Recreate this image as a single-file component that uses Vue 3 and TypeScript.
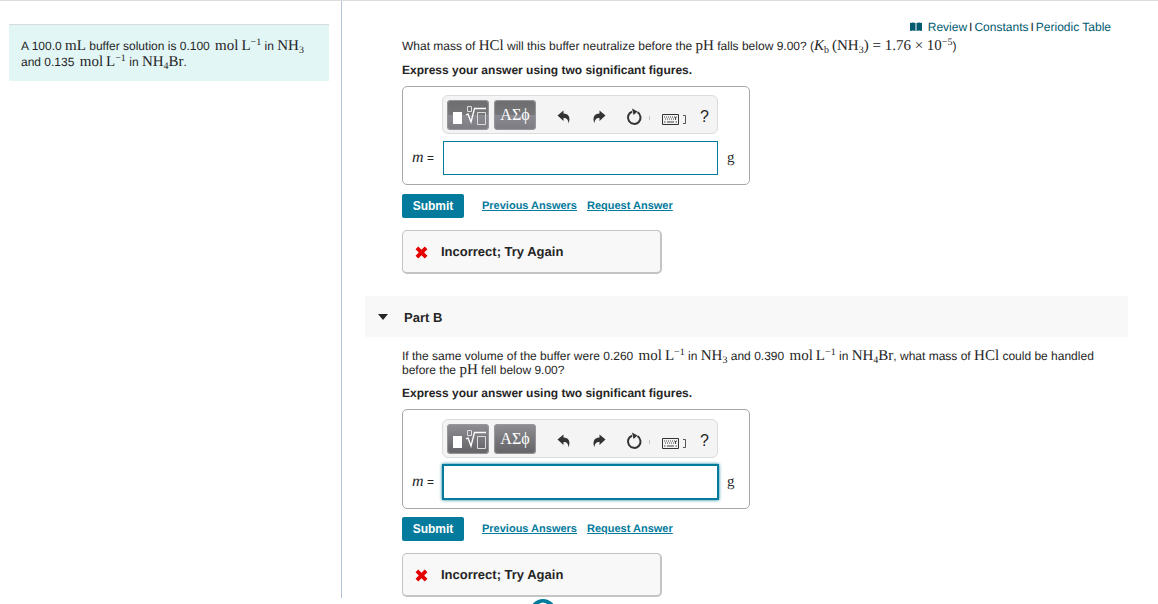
<script setup lang="ts">
import { ref } from 'vue'

interface Part {
  id: string
  title: string
  showHeader: boolean
}

const parts: Part[] = [
  { id: 'a', title: 'Part A', showHeader: false },
  { id: 'b', title: 'Part B', showHeader: true },
]

const answers = ref<Record<string, string>>({ a: '', b: '' })
const active = ref('b')
</script>

<template>
  <div class="page">
    <aside class="side">
      <div class="intro">
        A 100.0 <span class="math">mL</span> buffer solution is 0.100 <span class="math unit">mol&#8201;L<sup>−1</sup></span> in
        <span class="math">NH<sub>3</sub></span> and 0.135 <span class="math unit">mol&#8201;L<sup>−1</sup></span> in
        <span class="math">NH<sub>4</sub>Br</span>.
      </div>
    </aside>

    <main class="content">
      <nav class="resources">
        <svg class="book" viewBox="0 0 12 10" aria-hidden="true">
          <path d="M0 1Q3 0 5.500 1V9Q3 8 0 9ZM6.500 1Q9 0 12 1V9Q9 8 6.500 9Z" />
        </svg>
        <a href="#review">Review</a><span>I</span><a href="#constants">Constants</a><span>I</span><a href="#table">Periodic Table</a>
      </nav>

      <section v-for="part in parts" :key="part.id" class="part">
        <h2 v-if="part.showHeader" class="part-header">
          <svg class="caret" viewBox="0 0 10 6" aria-hidden="true"><path d="M0 0H10L5 6Z" /></svg>
          {{ part.title }}
        </h2>

        <div class="part-body">
          <p v-if="part.id === 'a'" class="question">
            What mass of <span class="math">HCl</span> will this buffer neutralize before the <span class="math">pH</span> falls below
            9.00? (<span class="math"><i>K</i><sub>b</sub>&#8201;(NH<sub>3</sub>) = 1.76 × 10<sup>−5</sup></span>)
          </p>
          <p v-else class="question">
            If the same volume of the buffer were 0.260 <span class="math unit">mol&#8201;L<sup>−1</sup></span> in
            <span class="math">NH<sub>3</sub></span> and 0.390 <span class="math unit">mol&#8201;L<sup>−1</sup></span> in
            <span class="math">NH<sub>4</sub>Br</span>, what mass of <span class="math">HCl</span> could be handled<br />
            before the <span class="math">pH</span> fell below 9.00?
          </p>
          <p class="instruction">Express your answer using two significant figures.</p>

          <form class="answer" @submit.prevent>
            <div class="entry">
              <div class="toolbar" :class="{ smooth: active === part.id }">
                <button type="button" class="palette" aria-label="Templates">
                  <svg viewBox="0 0 42 30" aria-hidden="true">
                    <path d="M6 12H15V24H6Z" fill="#fff" />
                    <path d="M20.500 6.500H24.500V11.500H20.500ZM30.500 12.500H38.500V24.500H30.500Z" fill="none" stroke="#ddd" />
                    <path d="M19 15L21 14L24 22L27.500 8.500H39" fill="none" stroke="#fff" stroke-width="1.300" />
                  </svg>
                </button>
                <button type="button" class="palette greek">ΑΣϕ</button>
                <button type="button" class="tool undo" aria-label="Undo">
                  <svg viewBox="0 0 14 14" aria-hidden="true">
                    <path d="M0.500 5.500L6.500 0.500V3.500C11.500 3.500 14 7.500 11.500 13.500C11.500 10 10 8 6.500 8V11Z" />
                  </svg>
                </button>
                <button type="button" class="tool redo" aria-label="Redo">
                  <svg viewBox="0 0 14 14" aria-hidden="true">
                    <path d="M13.500 5.500L7.500 0.500V3.500C2.500 3.500 0 7.500 2.500 13.500C2.500 10 4 8 7.500 8V11Z" />
                  </svg>
                </button>
                <button type="button" class="tool reset" aria-label="Reset">
                  <svg viewBox="0 0 16 18" aria-hidden="true">
                    <path d="M11.500 4.200A6.300 6.300 0 1 1 6 3.700" fill="none" stroke="#333" stroke-width="2" />
                    <path d="M6 0.500L11.500 3.500L7.500 7Z" />
                  </svg>
                </button>
                <span class="tick"></span>
                <button type="button" class="tool keys" aria-label="Keyboard shortcuts">
                  <svg viewBox="0 0 24 12" aria-hidden="true">
                    <path d="M0.500 1.500H16.500V11.500H0.500Z" fill="none" stroke="#333" />
                    <path d="M2 4H15M3 6H15" stroke="#444" stroke-dasharray="1 1" fill="none" />
                    <path d="M2 9H3.500M5 9H12M13.500 9H15M13.500 4V7" stroke="#444" fill="none" />
                    <path d="M21 2.500H23.500V10.500H21" stroke="#555" fill="none" />
                  </svg>
                </button>
                <button type="button" class="tool help" aria-label="Help">?</button>
              </div>
              <label class="variable" :for="'answer-' + part.id"><i>m</i> =</label>
              <input
                :id="'answer-' + part.id"
                v-model="answers[part.id]"
                class="field"
                :class="{ active: active === part.id }"
                type="text"
                autocomplete="off"
                @focus="active = part.id"
              />
              <span class="grams">g</span>
            </div>

            <div class="actions">
              <button type="submit" class="submit">Submit</button>
              <a href="#previous">Previous Answers</a>
              <a href="#request">Request Answer</a>
            </div>
          </form>

          <div class="feedback" role="status">
            <svg class="cross" viewBox="0 0 12 12" aria-hidden="true">
              <path d="M3 0.500L6 3.500L9 0.500L11.500 3L8.500 6L11.500 9L9 11.500L6 8.500L3 11.500L0.500 9L3.500 6L0.500 3Z" />
            </svg>
            Incorrect; Try Again
          </div>
        </div>
      </section>

      <button type="button" class="more" aria-label="More">
        <svg viewBox="0 0 26 26" aria-hidden="true">
          <circle cx="13" cy="13" r="13" fill="#047a9c" />
          <path d="M8 7Q13 2 18 7" fill="none" stroke="#fff" stroke-width="2" />
        </svg>
      </button>
    </main>
  </div>
</template>

<style>
body {
  margin: 0;
  background: #fff;
}
</style>

<style scoped>
.page {
  box-sizing: border-box;
  display: flex;
  height: 100vh;
  overflow: hidden;
  border-top: 1px solid #dcdcdc;
  color: #252525;
  font: 12px/14px "Liberation Sans", Arial, sans-serif;
  text-rendering: geometricPrecision;
}
.side {
  box-sizing: border-box;
  flex: 0 0 342px;
  margin-bottom: 6px;
  padding: 23px 12px 0 9px;
  border-right: 1px solid #b4c3d6;
}
.intro {
  padding: 13px 12px 11px;
  border-top: 1px solid #d5dcdc;
  background: #e2f6f6;
  line-height: 16px;
}
.math {
  font-family: "Liberation Serif", "Times New Roman", serif;
  font-size: 15px;
  line-height: 0;
}
.math sub,
.math sup {
  font-size: 10px;
  line-height: 0;
}
.math sub {
  vertical-align: -3px;
}
.math sup {
  vertical-align: 5px;
}
.unit {
  margin-left: 2px;
}
.content {
  flex: 1;
  min-width: 0;
  padding: 19px 30px 0 23px;
}
.resources {
  display: flex;
  justify-content: flex-end;
  gap: 2px;
  margin-right: 17px;
}
.resources a {
  color: #005a70;
  text-decoration: none;
}
.book {
  width: 12px;
  height: 10px;
  margin: 2px 4px 0 0;
  fill: #005a70;
}
.part-header {
  display: flex;
  align-items: center;
  box-sizing: border-box;
  gap: 16px;
  height: 41px;
  margin: 22px 0 12px;
  padding: 2px 13px 0;
  background: #f8f8f8;
  font-size: 13px;
}
.caret {
  width: 10px;
  height: 6px;
  margin-bottom: 2px;
  fill: #252525;
}
.part-body {
  padding-left: 37px;
}
.question {
  margin: 0;
}
.part:first-of-type .question {
  margin-top: 5px;
}
.instruction {
  margin: 10px 0 9px;
  font-weight: bold;
}
.part:last-of-type .instruction {
  margin-top: 9px;
}
.entry {
  box-sizing: border-box;
  display: grid;
  grid-template-columns: 31px 276px auto;
  grid-template-rows: 39px 34px;
  row-gap: 7px;
  align-items: center;
  width: 348px;
  padding: 8px 0 9px 8px;
  border: 1px solid #a8a8a8;
  border-radius: 5px;
}
.part:last-of-type .entry {
  padding-top: 9px;
}
.toolbar {
  box-sizing: border-box;
  grid-column: 2;
  display: flex;
  align-items: center;
  height: 39px;
  padding: 0 4px;
  border: 1px solid #dcdcdc;
  border-radius: 6px;
  background: #f4f4f4;
}
button {
  padding: 0;
  border: 0;
  background: none;
  font: inherit;
  color: inherit;
}
.palette {
  width: 42px;
  height: 30px;
  margin-right: 5px;
  border-radius: 4px;
  background: linear-gradient(#6c6c6f 0%, #77777a 50%, #8a8a92 51%, #7b7b80 100%);
  box-shadow: inset 0 0 1px 1px #98989c;
  color: #fff;
}
.smooth .palette {
  background: linear-gradient(#8e8e94, #636366);
}
.palette svg {
  display: block;
  width: 42px;
  height: 30px;
}
.greek {
  font: 16px/28px "Liberation Serif", "Times New Roman", serif;
}
.tool svg {
  display: block;
  fill: #333;
}
.undo,
.redo {
  width: 14px;
}
.undo {
  margin-left: 16px;
}
.redo {
  margin-left: 21px;
}
.undo,
.redo,
.reset,
.keys {
  padding-top: 5px;
}
.reset {
  width: 16px;
  margin-left: 20px;
}
.tick {
  width: 1px;
  height: 4px;
  margin: 6px 12px 0 7px;
  background: #c4c4c4;
}
.keys {
  width: 24px;
  padding-top: 8px;
}
.help {
  margin-left: 14px;
  padding-top: 5px;
  font-size: 16px;
}
.variable {
  grid-column: 1;
  grid-row: 2;
  padding-left: 1px;
  white-space: nowrap;
}
.variable i {
  font: italic 16px/16px "Liberation Serif", "Times New Roman", serif;
}
.field {
  box-sizing: border-box;
  grid-column: 2;
  grid-row: 2;
  width: 275px;
  height: 34px;
  margin: 0 0 0 1px;
  padding: 0 8px;
  border: 1px solid #047a9c;
  border-radius: 0;
  outline: none;
  background: #fff;
  font: 16px "Liberation Serif", "Times New Roman", serif;
}
.field.active {
  box-shadow: 0 0 0 1px #047a9c, 0 0 3px 1px #047a9c;
}
.grams {
  grid-column: 3;
  grid-row: 2;
  margin-left: 9px;
  font: 15px/16px "Liberation Serif", "Times New Roman", serif;
}
.actions {
  display: flex;
  align-items: center;
  gap: 10px;
  margin-top: 9px;
  font-size: 11px;
  font-weight: bold;
}
.part:last-of-type .actions {
  margin-top: 8px;
}
.actions a {
  color: #047a9c;
}
.submit {
  width: 62px;
  height: 24px;
  margin-right: 8px;
  border-radius: 2px;
  background: #047a9c;
  color: #fff;
  font-size: 12px;
}
.feedback {
  box-sizing: border-box;
  display: flex;
  align-items: center;
  gap: 13px;
  width: 260px;
  height: 44px;
  margin-top: 12px;
  padding: 1px 12px 0;
  border: 1px solid #c4c4c4;
  border-right-width: 2px;
  border-bottom-width: 2px;
  border-radius: 5px;
  background: #f8f8f8;
  font-size: 13px;
  font-weight: bold;
}
.cross {
  width: 13px;
  height: 13px;
  fill: #e60000;
}
.more {
  display: block;
  width: 26px;
  margin: 2px 0 0 165px;
}
.more svg {
  display: block;
}
</style>
